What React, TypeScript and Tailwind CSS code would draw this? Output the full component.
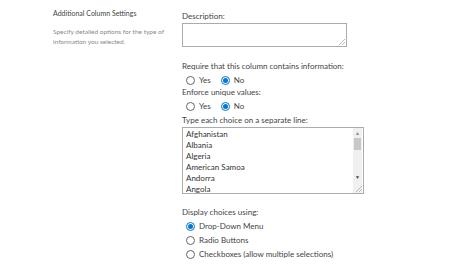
import React from "react";

const countries = [
  "Afghanistan",
  "Albania",
  "Algeria",
  "American Samoa",
  "Andorra",
  "Angola",
];

function Radio({ checked, label }: { checked?: boolean; label: string }) {
  return (
    <label className="flex items-center gap-[4px]">
      {checked ? (
        <span className="w-[9px] h-[9px] rounded-full border border-[#0078d4] flex items-center justify-center">
          <span className="w-[5px] h-[5px] rounded-full bg-[#0078d4]" />
        </span>
      ) : (
        <span className="w-[9px] h-[9px] rounded-full border border-[#666]" />
      )}
      <span>{label}</span>
    </label>
  );
}

function Grip() {
  return (
    <svg
      width="6"
      height="6"
      viewBox="0 0 6 6"
      className="absolute right-[1px] bottom-[1px]"
    >
      <path d="M6 0 L0 6 M6 3 L3 6" stroke="#aaa" strokeWidth="0.8" />
    </svg>
  );
}

export default function App() {
  return (
    <div
      className="w-[474px] h-[265px] bg-white flex text-[8px] leading-[11px] text-[#444] overflow-hidden"
      style={{ fontFamily: 'Lato, "Open Sans", sans-serif' }}
    >
      {/* left side */}
      <div className="w-[182px] pl-[53px] pt-[8px] pr-[10px] shrink-0">
        <div className="text-[#444] text-[7px]">Additional Column Settings</div>
        <div className="mt-[8px] text-[#8a8a8a] text-[6.5px] leading-[10px]">
          Specify detailed options for the type of
          <br />
          information you selected.
        </div>
      </div>

      {/* right side */}
      <div className="flex flex-col pt-[11px]">
        <div>Description:</div>
        <div className="relative mt-[1px] w-[165px] h-[24px] border border-[#ababab]">
          <Grip />
        </div>

        <div className="mt-[14px]">Require that this column contains information:</div>
        <div className="mt-[2px] h-[12px] flex items-center gap-[10px] pl-[4px]">
          <Radio label="Yes" />
          <Radio checked label="No" />
        </div>

        <div className="mt-[1px]">Enforce unique values:</div>
        <div className="mt-[2px] h-[12px] flex items-center gap-[10px] pl-[4px]">
          <Radio label="Yes" />
          <Radio checked label="No" />
        </div>

        <div className="mt-[3px]">Type each choice on a separate line:</div>
        <div className="relative mt-[1px] w-[182px] h-[67px] border border-[#ababab] flex">
          <div className="flex-1 pl-[3px] pt-[1px] text-[#333]">
            {countries.map((c) => (
              <div key={c} className="leading-[11px]">
                {c}
              </div>
            ))}
          </div>
          <div className="w-[9px] bg-[#f0f0f0] flex flex-col items-center mr-[1px]">
            <span className="text-[5px] leading-[8px] text-[#888] mt-[1px]">▲</span>
            <span className="w-[7px] h-[12px] bg-[#c8c8c8] mt-[1px]" />
            <span className="flex-1" />
            <span className="text-[5px] leading-[8px] text-[#444] mb-[12px]">▼</span>
          </div>
          <Grip />
        </div>

        <div className="mt-[13px]">Display choices using:</div>
        <div className="flex flex-col pl-[4px] mt-[3px] gap-[3px]">
          <Radio checked label="Drop-Down Menu" />
          <Radio label="Radio Buttons" />
          <Radio label="Checkboxes (allow multiple selections)" />
        </div>
      </div>
    </div>
  );
}
